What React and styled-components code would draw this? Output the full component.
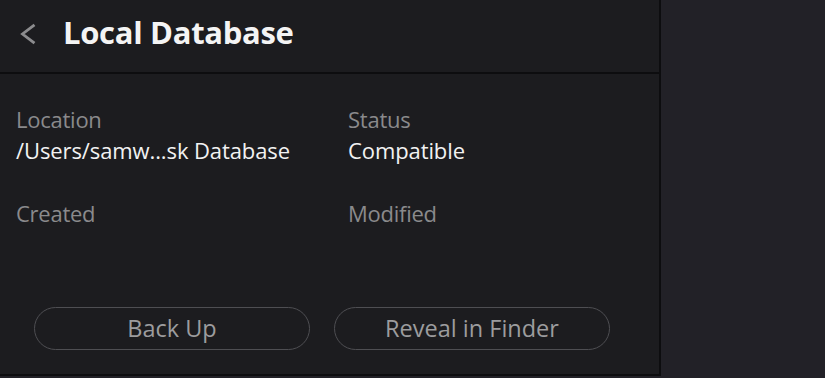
import React from "react";
import styled, { createGlobalStyle } from "styled-components";

const GlobalStyle = createGlobalStyle`
  html, body {
    margin: 0;
    padding: 0;
    background: #222127;
    font-family: "Open Sans", "Noto Sans", sans-serif;
  }
`;

//----------------------------------------------------------------
const Screen = styled.div`
  width: 825px;
  height: 378px;
  display: flex;
  align-items: flex-start;
  background: #222127;
  overflow: hidden;
`;
//----------------------------------------------------------------
const Panel = styled.div`
  width: 659px;
  height: 374px;
  display: flex;
  flex-direction: column;
  background: #1c1c1f;
  border-right: 2px solid #0d0d0f;
  border-bottom: 2px solid #0d0d0f;
`;
//----------------------------------------------------------------
const Header = styled.div`
  height: 56px;
  display: flex;
  align-items: flex-start;
  padding: 16px 0 0 19px;
  border-bottom: 2px solid #0d0d0f;
`;

const BackIcon = styled.svg`
  width: 18px;
  height: 22px;
  margin: 7px 26px 0 0;
  flex-shrink: 0;
`;

const Title = styled.h1`
  margin: 0;
  font-size: 31px;
  line-height: 32px;
  font-weight: 700;
  letter-spacing: -0.3px;
  color: #f4f4f4;
`;
//----------------------------------------------------------------
const Body = styled.div`
  flex: 1;
  display: flex;
  flex-direction: column;
  padding: 30px 16px 0;
`;

const InfoGrid = styled.div`
  display: grid;
  grid-template-columns: 332px 1fr;
  grid-template-rows: 94px auto;
`;

const Field = styled.div`
  display: flex;
  flex-direction: column;
`;

const Label = styled.span`
  font-size: 22px;
  line-height: 31px;
  letter-spacing: -0.25px;
  color: #8a8a8c;
`;

const Value = styled.span`
  font-size: 22px;
  line-height: 31px;
  letter-spacing: -0.1px;
  color: #f2f2f2;
`;
//----------------------------------------------------------------
const Actions = styled.div`
  margin-top: auto;
  display: flex;
  gap: 24px;
  padding: 0 0 24px 18px;
`;

const Button = styled.button`
  width: 276px;
  height: 43px;
  border-radius: 22px;
  border: 1.5px solid #4e4e52;
  background: transparent;
  color: #9c9c9e;
  font-family: "Open Sans", "Noto Sans", sans-serif;
  font-size: 23.5px;
  padding: 0 0 2px;
  cursor: pointer;
`;

const fields = [
  { label: "Location", value: "/Users/samw...sk Database" },
  { label: "Status", value: "Compatible" },
  { label: "Created", value: "" },
  { label: "Modified", value: "" },
];

export default function App() {
  return (
    <>
      <GlobalStyle />
      <Screen>
        <Panel>
          <Header>
            <BackIcon viewBox="0 0 18 22">
              <path
                d="M15.5 1.8 L3.5 11 L15.5 20.2"
                fill="none"
                stroke="#8c8c8e"
                strokeWidth="2.8"
              />
            </BackIcon>
            <Title>Local Database</Title>
          </Header>
          <Body>
            <InfoGrid>
              {fields.map((f) => (
                <Field key={f.label}>
                  <Label>{f.label}</Label>
                  {f.value && <Value>{f.value}</Value>}
                </Field>
              ))}
            </InfoGrid>
            <Actions>
              <Button>Back Up</Button>
              <Button>Reveal in Finder</Button>
            </Actions>
          </Body>
        </Panel>
      </Screen>
    </>
  );
}
